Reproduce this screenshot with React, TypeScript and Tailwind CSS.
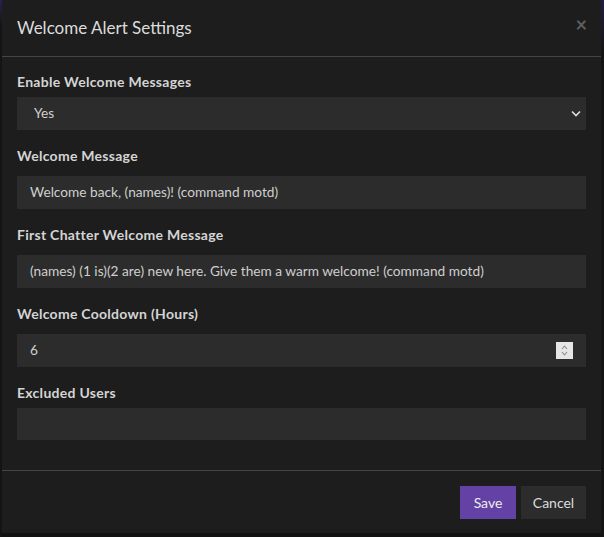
import type { ReactNode } from "react"

const font = { fontFamily: "Lato, 'Open Sans', sans-serif" }

function Label({ children, className = "" }: { children: ReactNode; className?: string }) {
  return (
    <div className={`h-5 text-[14px] leading-5 font-bold tracking-[0.02em] text-[#d4d4d4] ${className}`}>
      {children}
    </div>
  )
}

function Field({ value, className = "" }: { value?: string; className?: string }) {
  return (
    <div className={`flex h-[33px] items-center bg-[#2c2c2c] px-[13px] text-[13.7px] text-[#cfcfcf] ${className}`}>
      {value}
    </div>
  )
}

export default function App() {
  return (
    <div className="flex h-[537px] w-[604px] bg-[#121212]" style={font}>
      <div className="w-[2px] bg-linear-to-b from-[#2a1f52] via-[#141414] via-[5%] to-[#141414]" />

      <div className="flex h-[533px] w-[599px] flex-col bg-[#1d1d1d]">
        {/* Header */}
        <div className="flex h-[57px] items-center justify-between border-b border-[#454545] pl-[15px] pr-[14px]">
          <h2 className="text-[17px] text-[#dcdcdc]">Welcome Alert Settings</h2>
          <span className="-mt-[8px] text-[20px] font-bold leading-none text-[#5e5e5e]">×</span>
        </div>

        {/* Body */}
        <div className="flex flex-1 flex-col px-[15px] pt-[15px]">
          <Label>Enable Welcome Messages</Label>
          <div className="mt-[5px] flex h-[33px] items-center justify-between bg-[#2c2c2c] pl-[17px] pr-[5px] text-[13.7px] text-[#cfcfcf]">
            <span>Yes</span>
            <svg width="10" height="7" viewBox="0 0 10 7" className="text-[#e0e0e0]">
              <path d="M1 1.5 L5 5.5 L9 1.5" fill="none" stroke="currentColor" strokeWidth="1.6" />
            </svg>
          </div>

          <Label className="mt-4">Welcome Message</Label>
          <Field className="mt-[10px]" value="Welcome back, (names)! (command motd)" />

          <Label className="mt-4">First Chatter Welcome Message</Label>
          <Field className="mt-[10px]" value="(names) (1 is)(2 are) new here. Give them a warm welcome! (command motd)" />

          <Label className="mt-4">Welcome Cooldown (Hours)</Label>
          <div className="mt-[10px] flex h-[33px] items-center justify-between bg-[#2c2c2c] pl-[13px] pr-[13px] text-[13.7px] text-[#cfcfcf]">
            <span>6</span>
            <div className="flex h-[17px] w-[17px] flex-col items-center justify-center gap-[1px] bg-[#e6e6e6]">
              <svg width="7" height="5" viewBox="0 0 7 5">
                <path d="M1 4 L3.5 1 L6 4" fill="none" stroke="#8a8a8a" strokeWidth="1.1" />
              </svg>
              <svg width="7" height="5" viewBox="0 0 7 5">
                <path d="M1 1 L3.5 4 L6 1" fill="none" stroke="#8a8a8a" strokeWidth="1.1" />
              </svg>
            </div>
          </div>

          <Label className="mt-4">Excluded Users</Label>
          <div className="mt-[5px] h-[32px] bg-[#2c2c2c]" />
        </div>

        {/* Footer */}
        <div className="flex h-[63px] items-start justify-end gap-[5px] border-t border-[#454545] pr-[15px] pt-[15px]">
          <button className="h-[33px] w-[56px] bg-[#6441a5] text-[14px] text-[#ececec]">Save</button>
          <button className="h-[33px] w-[65px] bg-[#2c2c2c] text-[14px] text-[#dcdcdc]">Cancel</button>
        </div>
      </div>

      <div className="w-[3px] bg-linear-to-b from-[#231c40] via-[#141414] via-[10%] to-[#141414]" />
    </div>
  )
}
